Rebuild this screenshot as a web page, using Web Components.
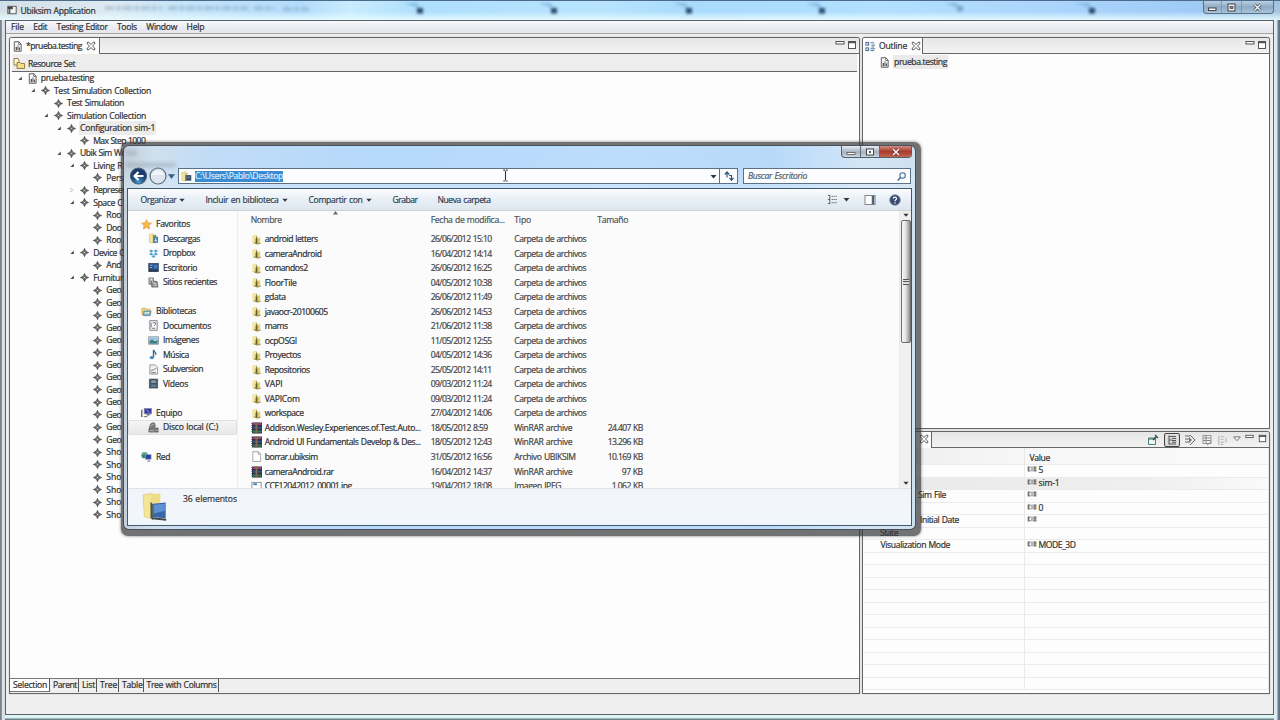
<!DOCTYPE html>
<html lang="es">
<head>
<meta charset="utf-8">
<title>Ubiksim Application</title>
<style>
html,body{margin:0;width:1280px;height:720px;overflow:hidden;background:#8b98a3}
body{font:8.600px/12px "Open Sans","Noto Sans",sans-serif;color:#2e2e2e;position:relative}
</style>
</head>
<body>
<app-window></app-window>
<explorer-window></explorer-window>
<script>
class Base extends HTMLElement{
  connectedCallback(){
    if(this.shadowRoot) return;
    this.attachShadow({mode:'open'}).innerHTML='<style>'+this.css()+'</style>'+this.html();
    this.ready&&this.ready();
  }
}

/* Text whose letter spacing is adjusted so that it takes exactly w pixels. */
class FitText extends Base{
  css(){return ':host{display:inline-block;white-space:pre;flex:none;-webkit-text-stroke:.2px currentColor}span{display:inline-block;word-spacing:.5px}'}
  html(){return '<span><slot></slot></span>'}
  ready(){
    const w=parseFloat(this.getAttribute('w'));
    if(!w) return;
    const s=this.shadowRoot.querySelector('span'),n=this.textContent.length;
    s.style.letterSpacing=((w-s.getBoundingClientRect().width)/n)+'px';
  }
}
customElements.define('fit-text',FitText);
const T=(t,w)=>`<fit-text${w?` w="${w}"`:''}>${t.replace('&','&amp;')}</fit-text>`;

const ICONS={
  app:'<rect x="1" y="1.5" width="10" height="9" fill="#f4f4f4" stroke="#444"/><path d="M1 2h6v3H1z" fill="#444"/><path d="M3 5v5" stroke="#555" stroke-width="2"/>',
  file:'<path d="M2.5.8h5l2.5 2.700v7.700h-7.500z" fill="#f5f5f5" stroke="#555"/><path d="M4 10V6.500h1.500V10zM6 10V5h1v5zM7.500 10V7h1.300v3z" fill="#555"/><path d="M7.300.8v3H10" fill="none" stroke="#555" stroke-width=".8"/>',
  resset:'<path d="M1 1.500h4l1 1.500v5H1z" fill="#fff6cf" stroke="#8a7440" stroke-width=".9"/><path d="M4 5.500h3l1 1h3.500v5H4z" fill="#f7dc86" stroke="#8a7440" stroke-width=".9"/>',
  diamond:'<path d="M6 2L7.600 4.400 10 6 7.600 7.600 6 10 4.400 7.600 2 6 4.400 4.400z" fill="#858585" stroke="#606060" stroke-width=".9"/><path d="M6 1.300v9.400M1.300 6h9.400" stroke="#555" stroke-width=".9"/><circle cx="6" cy="6" r=".9" fill="#ccc"/>',
  tri:'<path d="M8.200 4.200v4.200H4z" fill="#4a4a4a"/>',
  trir:'<path d="M4.500 3.500L7.500 6 4.500 8.500z" fill="#fff" stroke="#bbb" stroke-width=".8"/>',
  x:'<path d="M1.500 1.500h2L6 4.200l2.500-2.700h2v2L7.800 6l2.700 2.500v2h-2L6 7.800l-2.500 2.700h-2v-2L4.200 6 1.500 3.500z" fill="#fff" stroke="#4a4a4a" stroke-width="1.100"/>',
  min:'<rect x="2" y="2.500" width="8" height="2.500" fill="#fff" stroke="#555"/>',
  max:'<rect x="2.500" y="2.500" width="7" height="7" fill="#fff" stroke="#555"/><path d="M2 3.500h8" stroke="#555" stroke-width="1.500"/>',
  outline:'<g fill="#e8f2fa" stroke="#3b6288"><rect x="1" y="1.500" width="3" height="3"/><rect x="1" y="7.500" width="3" height="3"/></g><path d="M6 2h4M7 4.500h4M7 6.500h3M6 8.500h5M6 10.500h4" stroke="#44688a"/>',
  down:'<path d="M2 4h8L6 8.500z" fill="#303840"/>',
  vmenu:'<path d="M2 3.500h8L6 8z" fill="#fff" stroke="#555"/>',
  pin:'<path d="M1.500 4h7v6.500h-7z" fill="#eef6f2" stroke="#4b7f80"/><path d="M1.500 5h7" stroke="#366"/><path d="M6 6l4-4M8 1l3 3" stroke="#355" stroke-width="1.500"/>',
  cat:'<path d="M3 1.500v9M3 2.500h7M3 6h3M3 10h7M6 4.500h4M6 6.500h4M6 8.200h4" stroke="#555" fill="none"/>',
  adv:'<path d="M1 2h5M1 5h4M1 8h5M6 1l5 5-5 5" stroke="#666" fill="none"/><path d="M5 3l3 3-3 3z" fill="#777"/>',
  def:'<rect x="2" y="1.500" width="8" height="8" fill="#f4f4f4" stroke="#999"/><path d="M2 4h8M2 6.500h8M5 1.500v8M6 11l4-3" stroke="#888"/>',
  sort:'<path d="M2 1v10M4 2h4M4 5h3M4 8h4M4 10.500h3M10 3v5" stroke="#aaa"/>',
  attr:'<path d="M1 2.500h3.500M1 4.700h2.500M1 7h3.500M1.500 2v5.500M6 2v5.500M7.500 2.500h4M7.500 4.700h4M7.500 7h4M9.500 2v5.500" stroke="#4a4a4a" stroke-width="1"/>',
  folder:'<path d="M1.500 1.500l4-.7V11l-4-.8z" fill="#f3e6a0"/><path d="M5.500 1l1.500 3v7L5.500 11z" fill="#8c8136"/><path d="M7 4l3-.5v6.800L7 11z" fill="#e2cf70"/><path d="M5 5v6l2-.5V5z" fill="#655f2c"/><path d="M3 9.500l4 1.500 3.500-1" stroke="#8d8340" fill="none"/>',
  rar:'<rect x="1" y=".5" width="10" height="11" fill="#333"/><path d="M1.500 2h9" stroke="#9b3a7c" stroke-width="2"/><path d="M1.500 5.700h9" stroke="#3c4f97" stroke-width="2"/><path d="M1.500 9.500h9" stroke="#2f7d61" stroke-width="2"/><path d="M4.500.5h2v11h-2z" fill="#7d6b55"/><path d="M.5 1v10" stroke="#999" stroke-dasharray="1 1"/>',
  blank:'<path d="M2 .8h6l2.500 2.700v8H2z" fill="#fff" stroke="#8b8b8b" stroke-width=".8"/><path d="M8 .8v2.700h2.500" fill="none" stroke="#8b8b8b" stroke-width=".8"/>',
  jpg:'<rect x="1" y="1.500" width="10" height="9" fill="#fff" stroke="#7f8c99"/><path d="M2.500 3.500h4" stroke="#3f79b5" stroke-width="2"/>',
  star:'<path d="M6 .7l1.600 3.500 3.800.4-2.800 2.600.8 3.800L6 9.100 2.600 11l.8-3.800L.6 4.600l3.800-.4z" fill="#f9b84a" stroke="#d98a2b" stroke-width=".6"/>',
  dl:'<path d="M1.500 1.500l4-.7V11l-4-.8z" fill="#f1e4a0" stroke="#c5b25e" stroke-width=".5"/><path d="M5.500 2h3.500v9H5.500z" fill="#9a9252"/><rect x="6" y="4" width="5" height="6.500" fill="#3d7d9a"/><path d="M8.500 5v4M7 7.500l1.500 1.700L10 7.500" stroke="#d5f0ff" fill="none"/>',
  dfold:'<path d="M.8 1.500l4-.9V11l-4-.8z" fill="#f1e4a0" stroke="#c5b25e" stroke-width=".5"/><path d="M5 2l2.500-.5V4H5z" fill="#dccb7b"/><path d="M4.800 4h1.400v7H4.800z" fill="#55503a"/><rect x="6" y="4.500" width="5.200" height="6" fill="#33475f"/><path d="M7 6h3v2H7z" fill="#5f7d9c"/>',
  dropbox:'<path d="M3.500 1.500L6 3.200 3.500 5 1 3.300zM8.500 1.500L11 3.300 8.500 5 6 3.200zM3.500 5L6 6.700 3.500 8.300 1 6.700zM8.500 5L11 6.700 8.500 8.300 6 6.700zM6 7.500l2.300 1.600L6 10.800 3.700 9.100z" fill="#56a3d6"/>',
  desk:'<rect x=".8" y="1.500" width="10.500" height="8.800" fill="#274d80" stroke="#37465a" stroke-width=".8"/><path d="M2 3.500h3M2 6h2.500" stroke="#9cc3ea"/><path d="M6 3h4.500v4H6z" fill="#3f79bb"/><path d="M1 9.800h10" stroke="#222"/>',
  recent:'<path d="M1 1h5v7H1z" fill="#a8a8a8" stroke="#666" stroke-width=".7"/><path d="M4 4l6 1 1 6H4z" fill="#8c8c8c" stroke="#555" stroke-width=".7"/><path d="M2 3h3M6 7h3M6 9h4M3 1l3 6" stroke="#eee" stroke-width=".8"/>',
  lib:'<path d="M1 2.500h4l1 1h4v6H1z" fill="#f2da83" stroke="#b99a48" stroke-width=".7"/><path d="M3 5.500h8l-1 5H2.500z" fill="#7fb2c9" stroke="#4d7c93" stroke-width=".7"/><path d="M4 7.500h5" stroke="#f7f0b9" stroke-width="1.500"/>',
  doc:'<path d="M2 .8h8v10.400H2z" fill="#fff" stroke="#666" stroke-width=".9"/><path d="M5 3h3v2L6.500 6.500M4 9h4M3.500 3v5" stroke="#557" stroke-width=".9" fill="none"/>',
  img:'<rect x=".8" y="2" width="10.500" height="8" fill="#dfeef5" stroke="#6f7f88" stroke-width=".8"/><path d="M1.500 6l3-1 3 1.500 3-1v4h-9z" fill="#3e7f86"/><path d="M1.500 3h9v2h-9z" fill="#7dbbe0"/>',
  music:'<path d="M6 1v8" stroke="#2a6c9c" stroke-width="1.500"/><path d="M6 1c.5 2.500 3.500 2.500 2.500 5.500" fill="none" stroke="#2a6c9c" stroke-width="1.300"/><ellipse cx="4.200" cy="9.300" rx="2.400" ry="1.800" fill="#3f8fc2"/>',
  svn:'<path d="M2 1h6l2.500 2.500V11H2z" fill="#f2f2f2" stroke="#888" stroke-width=".9"/><path d="M3 8c2-3 3 0 4-2s2-1 2-1M3.500 9.500h5" stroke="#666" fill="none"/>',
  vid:'<rect x="1" y=".8" width="10" height="10.500" fill="#3f4c57"/><path d="M3.500 2.500h5v3h-5z" fill="#7da0b9"/><path d="M3.500 7h5v3h-5z" fill="#5d7e95"/><path d="M2 1v10M10 1v10" stroke="#b8c2ca" stroke-width=".8" stroke-dasharray="1 1"/>',
  pc:'<path d="M.8 3v8" stroke="#666" stroke-width="1.500"/><rect x="3.500" y="1.500" width="8" height="6" fill="#3336a0" stroke="#8b8fa8" stroke-width=".8"/><path d="M6 3l3 3" stroke="#aab7f1"/><path d="M6 8.500h4M7.500 8v2M3 10.500h4" stroke="#666"/>',
  disk:'<path d="M1 8l1.500-5 1.500-2h3l1 3-1 2.500h4V11H1z" fill="#777" stroke="#555" stroke-width=".7"/><path d="M3 5L5 2.500l1.500 1M2 9.500h5M8.500 9h2" stroke="#ccc" stroke-width=".8" fill="none"/>',
  net:'<circle cx="4" cy="4.500" r="3.500" fill="#2f8b62"/><path d="M1 4c2-3 4-2 5-1" stroke="#b9dff2" fill="none"/><rect x="5" y="4" width="6" height="5" fill="#2d3fa5" stroke="#98a5c0" stroke-width=".7"/><path d="M7 11h3" stroke="#555"/>',
  mag:'<circle cx="7.200" cy="4.800" r="3" fill="#f2f9ff" stroke="#3f668b" stroke-width="1.100"/><path d="M5 7L1.800 10.300" stroke="#3f668b" stroke-width="1.500"/>',
  refresh:'<path d="M4 7.500V2.500M1.800 4.500L4 2l2.200 2.500M6 5.500h2.500V10M6.500 8l2 2.300L10.500 8" stroke="#36597c" fill="none" stroke-width="1.200"/>',
  view:'<path d="M3 1v10M1 1.500h2M1 6h2M1 10.500h2" stroke="#555"/><path d="M5 2.500h6M5 6h6M5 9.500h6" stroke="#666" stroke-dasharray="1.500 .6"/>',
  preview:'<rect x="1" y="1.500" width="10" height="9" fill="#fff" stroke="#777" stroke-width=".9"/><path d="M9 2v8" stroke="#4a6580" stroke-width="2.500"/>',
  help:'<circle cx="6" cy="6" r="5.300" fill="#3a4b74" stroke="#7f8aa6" stroke-width=".8"/><path d="M4.300 4.600C4.500 2.600 7.700 2.800 7.500 4.700 7.400 5.800 6 5.800 6 7.300M6 8.200v1.300" stroke="#fff" stroke-width="1.200" fill="none"/>',
  big:'<path d="M1.500 1.500L5 .8v9.700L2 9.600z" fill="#f5e596" stroke="#d2bd62" stroke-width=".2"/><path d="M4.500 1.200l3.500-.4v4H4.500z" fill="#f0dc86"/><path d="M4.300 4l.9 1v6l-.9-1z" fill="#4f5346"/><path d="M5.200 4.800L10 4.300v5.900l-4.800-.4z" fill="#3767a8"/><path d="M5.500 5.200l4.200-.4v2.600l-4.200 1z" fill="#5d92d2"/><path d="M5 10.200l5.200.6" stroke="#42474c" stroke-width=".7"/>',
  ibeam:'<path d="M4 1h1.500M6.500 1H8M6 1.500v9M4 11h1.500M6.500 11H8" stroke="#333"/>'
};
class UiIcon extends Base{
  css(){const s=this.getAttribute('s')||11;return `:host{display:inline-block;flex:none;width:${s}px;height:${s}px}svg{display:block;width:100%;height:100%}`}
  html(){return `<svg viewBox="0 0 12 12">${ICONS[this.getAttribute('n')]}</svg>`}
}
customElements.define('ui-icon',UiIcon);
const I=(n,s)=>`<ui-icon n="${n}"${s?` s="${s}"`:''}></ui-icon>`;

class TreeRow extends Base{
  css(){return `:host{display:flex;align-items:center;height:12.470px;padding-left:${4.800+13.100*this.getAttribute('l')}px}
  .a{width:13px;height:11px}.i{width:12px;height:11px;margin-left:-1px}.t{line-height:12px;margin-left:2px;flex:none}
  .sel{background:#ececec;box-shadow:0 0 0 1px #ececec}`}
  html(){
    const a=this.getAttribute('a');
    return `<span class="a">${a=='o'?I('tri',10):a=='c'?I('trir',10):''}</span><span class="i">${I(this.getAttribute('i')||'diamond',11)}</span><span class="t ${this.hasAttribute('sel')?'sel':''}">${T(this.getAttribute('t'),this.getAttribute('w'))}</span>`}
}
customElements.define('tree-row',TreeRow);

class EditorTree extends Base{
  css(){return ':host{display:block;flex:1;background:#fdfdfd;overflow:hidden}'}
  html(){
    const r=[[0,'prueba.testing',53,'o','file'],[1,'Test Simulation Collection',97,'o'],[2,'Test Simulation',57],[2,'Simulation Collection',79,'o'],
      [3,'Configuration sim-1',75,'o',,1],[4,'Max Step 1000',52],[3,'Ubik Sim Wor',49,'o'],[4,'Living R',29,'o'],[5,'Pers',17],
      [4,'Represen',34,'c'],[4,'Space C',29,'o'],[5,'Roo',15],[5,'Doo',15],[5,'Roo',15],[4,'Device C',31,'o'],[5,'And',15],[4,'Furnitur',30,'o']];
    for(let i=0;i<13;i++) r.push([5,'Geo',15]);
    for(let i=0;i<6;i++) r.push([5,'Sho',15]);
    return r.map(x=>`<tree-row l="${x[0]}" t="${x[1]}" w="${x[2]}" a="${x[3]||''}" i="${x[4]||''}" ${x[5]?'sel':''}></tree-row>`).join('');
  }
}
customElements.define('editor-tree',EditorTree);

/* Panel with a tab strip on top; the active tab, tools and body are slotted. */
class ViewPanel extends Base{
  css(){return `:host{display:flex;flex-direction:column;box-sizing:border-box;border:1px solid #666;border-radius:3px 3px 0 0;background:#fdfdfd;overflow:hidden;box-shadow:0 0 1px #777}
  .strip{display:flex;height:15px;border-bottom:1px solid #666;background:linear-gradient(#e6e6e6,#f3f3f3);flex:none}
  .tab{display:flex;align-items:center;background:#fdfdfd;border-right:1px solid #666;height:16px;box-sizing:border-box;width:${this.getAttribute('tw')}px;padding-left:2px;gap:4px}
  .tools{margin-left:auto;display:flex;gap:1.500px;padding-right:${this.getAttribute('pr')||1}px}`}
  html(){return '<div class="strip"><div class="tab"><slot name="tab"></slot></div><div class="tools"><slot name="tools"></slot></div></div><slot></slot>'}
}
customElements.define('view-panel',ViewPanel);

class BottomTabs extends Base{
  css(){return `:host{display:flex;height:14px;border-top:1px solid #777;background:#efefef;flex:none}
  div{box-sizing:border-box;border-right:1px solid #555;padding-left:3px;line-height:12px;height:13px}
  .on{background:#fff;border-bottom:1px solid #777}`}
  html(){return [['Selection',34,40],['Parent',24,29],['List',13,18],['Tree',17,22],['Table',20.500,24.500],['Tree with Columns',70,75]]
    .map((x,i)=>`<div class="${i?'':'on'}" style="width:${x[2]}px">${T(x[0],x[1])}</div>`).join('')}
}
customElements.define('bottom-tabs',BottomTabs);

class PropertyTable extends Base{
  css(){return `:host{display:block;flex:1;overflow:hidden;background:#fdfdfd}
  .r{display:grid;grid-template-columns:161.500px 1fr;height:11.500px;border-bottom:1px solid #ebebeb;line-height:11px}
  .r>div{border-right:1px solid #e9e9e9;display:flex;align-items:center}
  .k{justify-content:flex-start}.v{padding-left:2px;gap:2px}.v ui-icon{margin-top:-1px}
  .h{height:16px;background:linear-gradient(90deg,#ececec,#f7f7f7 40%,#fafafa);line-height:16px}.h .v{padding-left:5px}.h fit-text{margin-top:2px}
  .sel{background:linear-gradient(90deg,#e9e9e9,#efefef 70%,#fafafa)}`}
  html(){
    const rows=[['',0,0,'5',4],['',0,0,'sim-1',21,1],['Sim File',28,55,'',0],['',0,0,'0',4],['Initial Date',39,57,'',0],['State',18,17,null],['Visualization Mode',69.500,17.500,'MODE_3D',37]];
    for(let i=0;i<11;i++) rows.push(['',0,0,null]);
    return `<div class="r h"><div></div><div class="v">${T('Value',20.500)}</div></div>`+rows.map(r=>`<div class="r ${r[5]?'sel':''}"><div class="k" style="padding-left:${r[2]}px">${r[0]?T(r[0],r[1]):''}</div><div class="v">${r[3]===null?'':I('attr',10)+(r[3]?T(r[3],r[4]):'')}</div></div>`).join('');
  }
}
customElements.define('property-table',PropertyTable);

class WindowButtons extends Base{
  css(){return `:host{display:flex;width:69px;height:12px;border:1px solid #5a7184;border-top:0;border-radius:0 0 4px 4px;background:linear-gradient(#b9d0e4,#8fabc4 50%,#a8c4da);margin-right:6px}
  i{display:flex;align-items:center;justify-content:center;border-right:1px solid #8299ad;width:19px}
  i:nth-child(2){width:17px}i:last-child{flex:1;border:0}svg{width:11px;height:9px}`}
  html(){return `<i><svg viewBox="0 0 11 9"><rect x="1.500" y="5" width="7.500" height="2.500" fill="#fff" stroke="#444"/></svg></i><i><svg viewBox="0 0 11 9"><rect x="2" y="1" width="7" height="7" fill="#eef" stroke="#444"/><rect x="4" y="3.500" width="3" height="2" fill="#789" stroke="#444" stroke-width=".7"/></svg></i><i><svg viewBox="0 0 11 9"><path d="M2.500 1.500l6 6M8.500 1.500l-6 6" stroke="#3c4a58" stroke-width="3"/><path d="M2.500 1.500l6 6M8.500 1.500l-6 6" stroke="#f5f8fb" stroke-width="1.400"/></svg></i>`}
}
customElements.define('window-buttons',WindowButtons);

class AppWindow extends Base{
  css(){return `:host{display:flex;flex-direction:column;width:1280px;height:720px;box-sizing:border-box;background:
    linear-gradient(90deg,#6f777e 0,#8e979f 1.500px,#dbe3ea 2.500px,#d2dbe3 5px,transparent 5px),linear-gradient(270deg,#5c6f82 0,#6d7f91 2px,#d5e6ee 3px,#e6f1f5 6px,transparent 6px),linear-gradient(0deg,#6b8085 0,#6b8085 1px,#d9f1f2 2px,#e4f6f7 6px,transparent 6px),#e8f4fa}
  .title{height:20px;box-sizing:border-box;border-top:1px solid #4c6b8c;display:flex;align-items:flex-start;position:relative;
    background:linear-gradient(180deg,transparent 55%,rgba(232,252,255,.9)),linear-gradient(90deg,#d3dfe8,#deeaf2 110px,#c6e4f9 180px,#b3dcfc 300px,#c9edfd 350px,#aedffd 420px,#b8e4fe 600px,#a9dbfd 700px,#b2e0fe 880px,#acd5fc 1050px,#9fcbf6 1190px,#a5c4de)}
  .title ui-icon{margin:4px 0 0 7px}.title fit-text{margin:4px 0 0 3.500px}.title window-buttons{margin-left:auto}
  .glow{position:absolute;left:0;top:0;width:1200px;height:19px;filter:blur(1.400px)}
  .client{margin:0 6px 0 5px;height:693px;border:1px solid #59626a;background:#efefef;display:flex;flex-direction:column;overflow:hidden}
  .menu{height:12px;display:flex;border-bottom:1px solid #a2a2a5;background:linear-gradient(#f8f9fb,#e6e7ee 80%,#eaeaef);line-height:13px;padding-left:5px;flex:none}
  .menu fit-text{margin-right:9.300px}
  .work{display:grid;grid-template-columns:851px 408px;column-gap:2px;padding:3px 0 0 3px;height:657px}
  .right{display:grid;grid-template-rows:392px 263px;row-gap:2px}
  .res{height:17px;border-bottom:1px solid #666;background:#ededed;display:flex;align-items:center;gap:3px;margin:0 2px;padding-left:1px;flex:none}
  .res fit-text{margin-top:2px}
  .ol{display:flex;align-items:center;gap:4px;margin:2px 0 0 16px}
  .ol fit-text{background:#eaeaea;box-shadow:0 0 0 1px #eaeaea}
  .on{border:1px solid #444;border-radius:2px;background:#ddd;display:flex;height:12px;padding:0 1px}
  [slot=tools]{margin-top:1px}
  .tt{display:flex;gap:4.500px;align-items:center;margin-right:2px}`}
  html(){
    const blobs=[420,554,689,822,960,1092].map((x,i)=>`<rect x="${x-3}" y="${i==4?5:7}" width="6" height="5.500" fill="${i==4?'#7ba6c8':'#28496a'}"/><path d="M${x-16} 2h13l2 5z" fill="#6aa3cf" opacity=".6"/>`).join('');
    return `<div class="title"><svg class="glow" viewBox="0 0 1200 19"><path d="M105 7h57M168 7h80M254 7h20M283 8h26" stroke="#7896b3" stroke-width="4" stroke-dasharray="9 2 5 2" opacity=".4"/>${blobs}</svg>${I('app',10)}${T('Ubiksim Application',75)}<window-buttons></window-buttons></div>
    <div class="client"><div class="menu">${[['File',13],['Edit',14],['Testing Editor',51],['Tools',20],['Window',31],['Help',18]].map(m=>T(m[0],m[1])).join('')}</div>
    <div class="work">
      <view-panel tw="90" pr="1.500"><span slot="tab" style="display:contents">${I('file',11)}<span style="margin-left:-1px">${T('*prueba.testing',56)}</span>${I('x',10)}</span>
        <span slot="tools">${I('min',12)}${I('max',12)}</span>
        <div class="res">${I('resset',12)}${T('Resource Set',47)}</div>
        <editor-tree></editor-tree><bottom-tabs></bottom-tabs></view-panel>
      <div class="right">
        <view-panel tw="60"><span slot="tab" style="display:contents">${I('outline',11)}<span style="margin-left:-1px">${T('Outline',28)}</span>${I('x',10)}</span>
          <span slot="tools">${I('min',12)}${I('max',12)}</span>
          <div class="ol">${I('file',11)}${T('prueba.testing',53)}</div></view-panel>
        <view-panel tw="69"><span slot="tab" style="margin-left:54px;height:12px">${I('x',10)}</span>
          <span slot="tools" class="tt">${I('pin',12)}<span class="on">${I('cat',12)}</span>${I('adv',12)}${I('def',12)}${I('sort',11)}</span><span slot="tools">${I('vmenu',10)} ${I('min',11)} ${I('max',11)}</span>
          <property-table></property-table></view-panel>
      </div></div></div>`;
  }
}
customElements.define('app-window',AppWindow);

class NavPane extends Base{
  css(){return `:host{display:block;width:109px;border-right:1px solid #eceef0;padding-top:6px;background:#fcfcfc;flex:none}
  div{height:14.530px;display:flex;align-items:center;gap:4px;box-sizing:border-box}
  .sel{background:linear-gradient(#f6f6f6,#e6e6e6);border-radius:2px;box-shadow:inset 0 0 0 1px #e0e0e0}`}
  html(){return [['star','Favoritos',34],['dl','Descargas',37,1],['dropbox','Dropbox',32,1],['desk','Escritorio',34,1],['recent','Sitios recientes',54,1],0,
    ['lib','Bibliotecas',40],['doc','Documentos',48,1],['img','Imágenes',36,1],['music','Música',26,1],['svn','Subversion',40,1],['vid','Vídeos',25,1],0,
    ['pc','Equipo',26],['disk','Disco local (C:)',55,1,1],0,['net','Red',14]]
    .map(x=>x?`<div class="${x[4]?'sel':''}" style="padding-left:${x[3]?20:13}px">${I(x[0],x[3]?11:11)}${T(x[1],x[2])}</div>`:'<div></div>').join('')}
}
customElements.define('nav-pane',NavPane);

class FileList extends Base{
  css(){return `:host{display:block;flex:1;overflow:hidden;background:#fbfbfb}
  .r,.h{display:grid;grid-template-columns:14px 166px 83.500px 83px 45.500px;align-items:center;padding-left:12.700px}
  .r{height:14.530px}.h{height:21px;color:#4a5560;box-sizing:border-box;padding-bottom:4px;position:relative}
  .r>:nth-child(n+3){color:#444}.h>:first-child{grid-column:1/3}.s{justify-self:end}
  .caret{position:absolute;left:94px;top:0;width:7px;height:4px}`}
  html(){
    const f=[['android letters',53,'26/06/2012 15:10'],['cameraAndroid',57,'16/04/2012 14:14'],['comandos2',43,'26/06/2012 16:25'],['FloorTile',32,'04/05/2012 10:38'],['gdata',21,'26/06/2012 11:49'],['javaocr-20100605',63,'26/06/2012 14:53'],['mams',23,'21/06/2012 11:38'],['ocpOSGI',32,'11/05/2012 12:55'],['Proyectos',36,'04/05/2012 14:36'],['Repositorios',45,'25/05/2012 14:11'],['VAPI',18,'09/03/2012 11:24'],['VAPICom',35,'09/03/2012 11:24'],['workspace',39,'27/04/2012 14:06'],
    ['Addison.Wesley.Experiences.of.Test.Auto...',156,'18/05/2012 8:59','WinRAR archive',58,'24.407 KB',35,'rar'],['Android UI Fundamentals Develop & Des...',156,'18/05/2012 12:43','WinRAR archive',58,'13.296 KB',35,'rar'],['borrar.ubiksim',53,'31/05/2012 16:56','Archivo UBIKSIM',61.5,'10.169 KB',35,'blank'],['cameraAndroid.rar',69,'16/04/2012 14:37','WinRAR archive',58,'97 KB',21,'rar'],['CCF12042012_00001.jpg',87,'19/04/2012 18:08','Imagen JPEG',47,'1.062 KB',31,'jpg']];
    return `<div class="h">${T('Nombre',31)}${T('Fecha de modifica...',74)}${T('Tipo',17)}${T('Tamaño',31)}<svg class="caret" viewBox="0 0 7 4"><path d="M3.500 0L6 3.500H1z" fill="#666"/></svg></div>`+
    f.map(x=>`<div class="r">${I(x[7]||'folder',x[7]=='rar'?12:11)}${T(x[0],x[1])}${T(x[2],x[2].length<16?57:61)}${T(x[3]||'Carpeta de archivos',x[4]||72)}<span class="s">${x[5]?T(x[5],x[6]):''}</span></div>`).join('');
  }
}
customElements.define('file-list',FileList);

class ScrollBar extends Base{
  css(){return `:host{display:flex;flex-direction:column;width:11px;background:#f0f0f0;align-items:center;flex:none;border-left:1px solid #eaeaea}
  ui-icon:first-child{transform:rotate(180deg);margin-top:1px}
  .th{width:8px;height:121px;margin-top:1px;border:1px solid #6c6c6c;border-radius:2px;background:linear-gradient(90deg,#f8f8f8,#e2e2e2 45%,#8c8c8c);display:flex;align-items:center;justify-content:center}
  .g{width:6px;height:6px;background:repeating-linear-gradient(#555 0 1px,#ddd 1px 2.500px)}
  ui-icon:last-child{margin-top:auto;margin-bottom:1px}`}
  html(){return I('down',8)+'<div class="th"><div class="g"></div></div>'+I('down',8)}
}
customElements.define('scroll-bar',ScrollBar);

class CommandBar extends Base{
  css(){return `:host{display:flex;height:21px;border-bottom:1px solid #c9d0d7;background:linear-gradient(#fbfdff,#eaf0f7 45%,#dde6ef);align-items:center;padding:0 10px 0 12.500px;color:#2d3d50;flex:none}
  ui-icon{margin:0}`}
  html(){const g=w=>`<span style="width:${w}px"></span>`;
    return T('Organizar',36)+g(1)+I('down',8)+g(20)+T('Incluir en biblioteca',73)+g(2)+I('down',8)+g(20)+T('Compartir con',54)+g(2)+I('down',8)+g(20)+T('Grabar',25)+g(20)+T('Nueva carpeta',53)+'<span style="flex:1"></span>'+I('view',11)+g(4)+I('down',9)+g(13)+I('preview',12)+g(13)+I('help',12)}
}
customElements.define('command-bar',CommandBar);

class ExplorerWindow extends Base{
  css(){return `:host{display:block;position:absolute;left:121px;top:142px;width:800px;height:394px;box-sizing:border-box;padding:4px 6px 7px 3px;border-radius:7px;background:rgba(52,54,56,.7);box-shadow:0 0 3px rgba(60,60,60,.7)}
  .glass{height:383px;border-radius:5px;box-sizing:border-box;padding:0 3px 3px;display:flex;flex-direction:column;box-shadow:0 0 0 1px rgba(50,60,70,.6);
   background:linear-gradient(180deg,transparent 20px,rgba(230,244,255,.35) 42px,transparent 60px),linear-gradient(90deg,#c3d0dc,#cfdfee 30px,#c0dcf7 90px,#b5d9fb 250px,#bcddfc 500px,#b8daf9 650px,#d3e6f6 740px,#cfe1f0)}
  .top{height:22px;display:flex;justify-content:flex-end;flex:none}
  .wb{display:flex;width:69px;height:11px;border:1px solid #55606b;border-top:0;border-radius:0 0 4px 4px;overflow:hidden;background:linear-gradient(#e5edf4,#a5b3bf 55%,#cbd6df)}
  .wb i{width:18px;border-right:1px solid #616b75;display:flex;align-items:center;justify-content:center}
  .wb i:last-child{flex:1;border:0;background:linear-gradient(#cf8d82,#a93a2e 50%,#c2654f)}
  .wb svg{width:10px;height:8px}
  .addr{height:16px;display:flex;flex:none;align-items:center;padding-left:2px}
  .nav{width:49px;height:18px;flex:none}.nav svg{display:block}
  .box{box-sizing:border-box;height:16px;border:1px solid #5c7186;background:#fbfdff;display:flex;align-items:center}
  .path{width:542px;padding:0 1px 0 2px}.path b{font-weight:400;background:#3a8bd2;color:#d9ecff;line-height:11px;height:11px;margin-left:3px;display:block;flex:none}
  .path .sp{flex:1}.rf{width:18px;border-left:0;justify-content:center}
  .search{width:168px;margin-left:5px;padding:0 3px 0 4px;font-style:italic;color:#4f5a66;justify-content:space-between}
  .client{margin-top:4px;border:1px solid #44576b;height:336px;display:flex;flex-direction:column;background:#fbfbfb;overflow:hidden}
  .mid{height:277px;display:flex;overflow:hidden;flex:none}
  .det{flex:1;background:linear-gradient(#f1f5fb,#f3f7fb 70%,#eef6fb);border-top:1px solid #dde3ea;display:flex;padding-left:11px;color:#333}
  .det ui-icon{margin-top:2px}.det fit-text{margin:4px 0 0 12px}
  .cur{position:absolute;left:378px;top:27px}
  .ghost{position:absolute;left:4px;top:3px;width:80px;height:44px;filter:blur(2px);opacity:.3}`}
  html(){return `<div class="glass"><div class="top"><div class="wb"><i><svg viewBox="0 0 10 8"><rect x="1" y="4.500" width="8" height="2" fill="#fff" stroke="#555" stroke-width=".8"/></svg></i><i><svg viewBox="0 0 10 8"><rect x="1.500" y="1" width="7" height="6" fill="#fff" stroke="#444"/><path d="M4 3h2v2H4z" fill="#555"/></svg></i><i><svg viewBox="0 0 10 8"><path d="M2 1l6 6M8 1L2 7" stroke="#6a2018" stroke-width="2.800"/><path d="M2 1l6 6M8 1L2 7" stroke="#fff" stroke-width="1.500"/></svg></i></div></div>
  <div class="addr"><div class="nav"><svg width="48" height="18" viewBox="0 0 48 18"><defs><radialGradient id="b" cx=".5" cy=".9"><stop offset="0" stop-color="#3f9bd5"/><stop offset="1" stop-color="#183a6c"/></radialGradient></defs><circle cx="9.500" cy="9" r="8" fill="url(#b)" stroke="#4c6076" stroke-width="1.200"/><path d="M14.500 9h-8M9.500 5l-4 4 4 4" stroke="#fff" stroke-width="2.200" fill="none"/><circle cx="29" cy="9" r="8" fill="#dde6ee" stroke="#5f6f7f" stroke-width="1.200"/><path d="M22 8q7-9 14 0z" fill="#f3f6f9"/><path d="M39.500 7.500h6l-3 4z" fill="#335f88" stroke="#335f88" stroke-width=".6"/></svg></div>
  <div class="box path">${I('dfold',11)}<b>${T('C:\\Users\\Pablo\\Desktop',88)}</b><span class="sp"></span>${I('down',9)}</div><div class="box rf">${I('refresh',12)}</div><div class="box search">${T('Buscar Escritorio',59)}${I('mag',11)}</div></div>
  <div class="client"><command-bar></command-bar><div class="mid"><nav-pane></nav-pane><file-list></file-list><scroll-bar></scroll-bar></div>
  <div class="det">${I('big',32)}${T('36 elementos',54)}</div></div></div><svg class="ghost" viewBox="0 0 80 44"><path d="M1 8h11M1 20h50" stroke="#566" stroke-width="4"/></svg><ui-icon class="cur" n="ibeam" s="13"></ui-icon>`}
}
customElements.define('explorer-window',ExplorerWindow);
</script>
</body>
</html>
